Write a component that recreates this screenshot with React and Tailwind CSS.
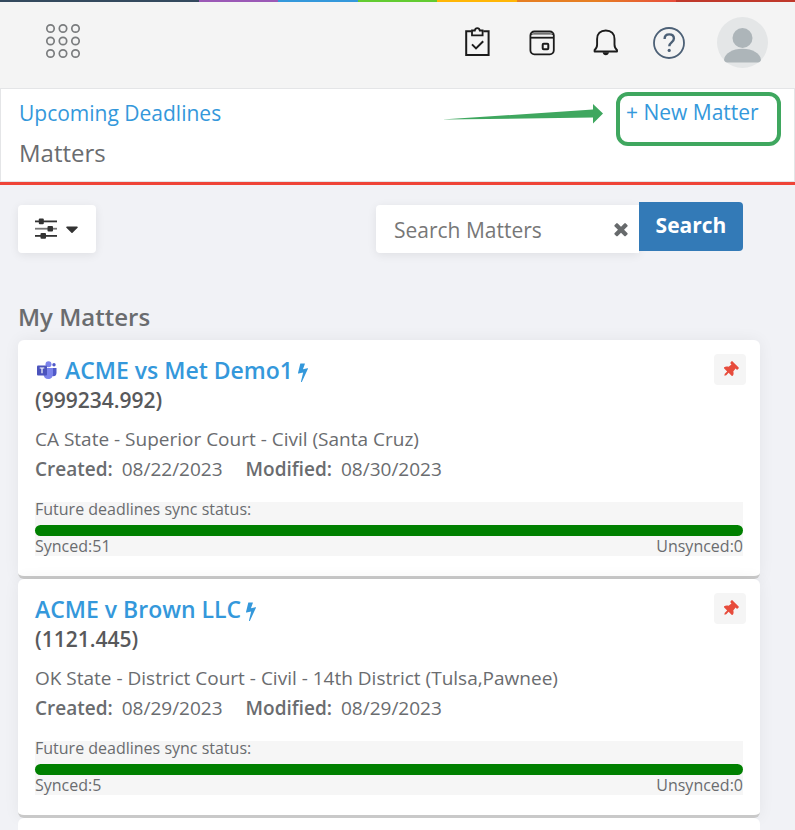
import { useState } from "react";
import { FaCaretDown, FaThumbtack } from "react-icons/fa";

const matters = [
  {
    id: "999234.992",
    name: "ACME vs Met Demo1",
    teams: true,
    court: "CA State - Superior Court - Civil (Santa Cruz)",
    created: "08/22/2023",
    modified: "08/30/2023",
    synced: 51,
    unsynced: 0,
  },
  {
    id: "1121.445",
    name: "ACME v Brown LLC",
    teams: false,
    court: "OK State - District Court - Civil - 14th District (Tulsa,Pawnee)",
    created: "08/29/2023",
    modified: "08/29/2023",
    synced: 5,
    unsynced: 0,
  },
];

const AppsIcon = () => (
  <svg className="h-9 w-9" viewBox="0 0 36 36" fill="none" stroke="#7a7c7e" strokeWidth="1.7">
    {[5.5, 18, 30.5].map((cy) =>
      [5.5, 18, 30.5].map((cx) => <circle key={`${cx}-${cy}`} cx={cx} cy={cy} r="3.7" />)
    )}
  </svg>
);

const TasksIcon = () => (
  <svg className="h-8 w-8" viewBox="0 0 32 32" fill="none" stroke="#1b1b1b" strokeWidth="2">
    <path d="M10.5 4.2H5.2v23.800h22.400V4.200h-5.300" />
    <path d="M11 3.500v4.800h10.600V3.500h-2.800c-.3-1.700-1.200-2.300-2.500-2.300s-2.200.6-2.500 2.300z" strokeWidth="1.800" />
    <path d="M11 17.400l4 4 7.200-7.200" />
  </svg>
);

const WalletIcon = () => (
  <svg className="h-8 w-8" viewBox="0 0 32 32" fill="none" stroke="#1b1b1b" strokeWidth="1.800">
    <rect x="5.400" y="4.500" width="23.400" height="22.800" rx="4" />
    <path d="M5.400 8.700c1-1.400 2-1.800 3.400-1.800h16.600c1.400 0 2.400.4 3.400 1.800" strokeWidth="1" />
    <path d="M5.400 10.700h23.400" />
    <rect x="17.700" y="16.700" width="5.600" height="5.600" rx="1" strokeWidth="2" />
  </svg>
);

const BellIcon = () => (
  <svg className="h-8 w-8" viewBox="0 0 32 32" fill="none" stroke="#1b1b1b" strokeWidth="1.900" strokeLinejoin="round">
    <path d="M5.600 24.500v-1.500c1.900-1.400 2.500-3 2.500-5.400v-5.600c0-5.200 3.300-8.500 8.700-8.500s8.700 3.300 8.700 8.500v5.600c0 2.400.6 4 2.500 5.400v1.500z" />
    <path d="M13.600 25.200c.4 2 1.500 3 3.200 3s2.800-1 3.200-3z" fill="#1b1b1b" stroke="none" />
  </svg>
);

const HelpIcon = () => (
  <svg className="h-8 w-8" viewBox="0 0 32 32" fill="none" stroke="#4c6076">
    <circle cx="16" cy="16" r="15" strokeWidth="1.800" />
    <path d="M11.600 12c0-2.900 1.900-4.600 4.600-4.600 2.800 0 4.700 1.600 4.700 4.200 0 3.900-4.600 3.700-4.600 7.600" strokeWidth="2.400" />
    <circle cx="16.200" cy="23.400" r="1.600" fill="#4c6076" stroke="none" />
  </svg>
);

const Avatar = () => (
  <svg className="h-[51px] w-[51px]" viewBox="0 0 51 51">
    <circle cx="25.500" cy="25.500" r="25.500" fill="#e4e6e7" />
    <circle cx="25.500" cy="21" r="10" fill="#adb5b9" />
    <path d="M7 43c.5-6.500 8.500-11.200 18.500-11.200S43.500 36.500 44 43c-.5 1.500-1.500 2.300-3 2.500H10c-1.500-.2-2.500-1-3-2.500z" fill="#adb5b9" />
  </svg>
);

const Arrow = () => (
  <svg className="mt-3 h-5 w-[161px]" viewBox="0 0 161 20" fill="#3fa75f">
    <path d="M0 15.500L151 5.500V0l10 9.600-10 10v-6z" />
  </svg>
);

const SlidersIcon = () => (
  <svg className="h-[22px] w-[22px]" viewBox="0 0 22 22" fill="#333">
    <rect y="2.500" width="22" height="1.800" />
    <rect y="9.800" width="22" height="1.800" fill="#777" />
    <rect y="17" width="22" height="1.800" />
    <rect x="3.800" y="0.600" width="5" height="5.600" rx="1" />
    <rect x="12.500" y="7.900" width="5.500" height="5.600" rx="1" />
    <rect x="5.500" y="15.100" width="5.500" height="5.600" rx="1" />
  </svg>
);

const ClearIcon = () => (
  <svg className="h-5 w-4" viewBox="0 0 1408 1792" fill="#676a6c">
    <path d="M1298 1322q0 40-28 68l-136 136q-28 28-68 28t-68-28l-294-294-294 294q-28 28-68 28t-68-28l-136-136q-28-28-28-68t28-68l294-294-294-294q-28-28-28-68t28-68l136-136q28-28 68-28t68 28l294 294 294-294q28-28 68-28t68 28l136 136q28 28 28 68t-28 68l-294 294 294 294q28 28 28 68z" />
  </svg>
);

const BoltIcon = () => (
  <svg className="mt-1 h-5 w-[10px]" viewBox="0 0 896 1792" fill="#3498db">
    <path d="M885 566q18 20 7 44l-540 1157q-13 25-42 25-4 0-14-2-17-5-25.500-19t-4.500-30l197-808-406 101q-4 1-12 1-18 0-31-11-18-15-13-39l201-825q4-14 16-23t28-9h328q19 0 32 12.500t13 29.500q0 8-5 18l-171 463 396-98q8-2 12-2 19 0 34 15z" />
  </svg>
);

const TeamsIcon = () => (
  <svg className="ml-[2px] h-5 w-5" viewBox="0 0 20 20">
    <circle cx="17" cy="4.800" r="1.700" fill="#5059c9" />
    <circle cx="11.500" cy="4.300" r="3" fill="#7b83eb" />
    <path d="M13 8h6.500v5c0 2-1.300 3.300-3 3.300s-3-1-3.500-3z" fill="#5059c9" />
    <path d="M6.500 8h9.500v6c0 3-2 5-4.800 5s-4.700-2-4.700-5z" fill="#7b83eb" />
    <rect y="5.500" width="10" height="10" rx="1" fill="#4b53bc" />
    <path d="M2.700 8h4.600M5 8v5.200" stroke="#fff" strokeWidth="1.200" />
  </svg>
);

const MatterCard = ({ matter }) => (
  <article className="rounded-md border-b-[3px] border-[#c9c9c9] bg-white px-[17px] pt-[14px] pb-5 shadow-[0_0_16px_rgba(0,0,0,0.06)]">
    <div className="flex items-start justify-between">
      <div>
        <h3 className="flex h-8 items-center gap-2 text-[23px] font-semibold text-[#3498db]">
          {matter.teams && <TeamsIcon />}
          <a href="#matter" className="flex items-center gap-[5px]">
            {matter.name}
            <BoltIcon />
          </a>
        </h3>
        <p className="text-[21px] leading-7 font-semibold text-[#58595b]">({matter.id})</p>
      </div>
      <button
        type="button"
        aria-label="Unpin matter"
        className="-mr-[3px] flex h-[31px] w-8 items-center justify-center rounded bg-[#f5f5f5] text-[#e74c3c]"
      >
        <FaThumbtack className="h-4 w-4 rotate-45" />
      </button>
    </div>
    <div className="mt-[10px] text-[19px] leading-[30px]">
      <p>{matter.court}</p>
      <p className="flex gap-[9px]">
        <span className="font-semibold">Created:</span>
        <span className="mr-[14px]">{matter.created}</span>
        <span className="font-semibold">Modified:</span>
        <span>{matter.modified}</span>
      </p>
    </div>
    <div className="mt-[18px] bg-[#f6f6f6] text-[16px]">
      <p className="mb-[9px] leading-[14px]">Future deadlines sync status:</p>
      <div className="h-[11px] rounded-full bg-[#008000]" />
      <div className="flex justify-between leading-5">
        <span>Synced:{matter.synced}</span>
        <span>Unsynced:{matter.unsynced}</span>
      </div>
    </div>
  </article>
);

const App = () => {
  const [search, setSearch] = useState("");

  return (
    <div className="flex min-h-screen flex-col bg-[#f1f2f6] font-['Open_Sans',sans-serif] text-[#6a6c6f]">
      <div className="h-[2px] bg-[linear-gradient(to_right,#34495e_25%,#9b59b6_25%,#9b59b6_35%,#3498db_35%,#3498db_45%,#62cb31_45%,#62cb31_55%,#ffb606_55%,#ffb606_65%,#e67e22_65%,#e67e22_75%,#e74c3c_85%,#c0392b_85%)]" />
      <header className="flex h-[86px] items-start justify-between bg-[#f4f4f4] pt-[15px] pr-[27px] pl-[45px]">
        <button type="button" aria-label="Apps" className="mt-[6px]">
          <AppsIcon />
        </button>
        <nav className="flex items-center gap-8">
          <button type="button" aria-label="Tasks">
            <TasksIcon />
          </button>
          <button type="button" aria-label="Wallet">
            <WalletIcon />
          </button>
          <button type="button" aria-label="Notifications">
            <BellIcon />
          </button>
          <button type="button" aria-label="Help">
            <HelpIcon />
          </button>
          <button type="button" aria-label="Profile">
            <Avatar />
          </button>
        </nav>
      </header>

      <section className="flex items-start justify-between border-b-[3px] border-[#ef4438] bg-white pr-[14px] pl-[19px] shadow-[inset_0_0_0_1px_#e4e5e7]">
        <div className="pt-[9px] pb-[11px]">
          <a href="#deadlines" className="block text-[21px] leading-8 text-[#3498db]">
            Upcoming Deadlines
          </a>
          <h1 className="pt-[6px] text-[24px] leading-9">Matters</h1>
        </div>
        <div className="flex items-start gap-[13px] pt-1">
          <Arrow />
          <a
            href="#new-matter"
            className="h-[54px] w-[165px] rounded-xl border-4 border-[#3fa75f] pl-[6px] text-[21px] leading-8 whitespace-nowrap text-[#3498db]"
          >
            + New Matter
          </a>
        </div>
      </section>

      <main className="flex flex-1 flex-col pr-[35px] pl-[18px]">
        <div className="flex items-start justify-between pt-[17px] pr-[17px]">
          <button
            type="button"
            aria-label="Filter matters"
            className="mt-[3px] flex h-12 w-[78px] items-center justify-center gap-2 rounded bg-white text-[#333] shadow-[0_2px_10px_rgba(0,0,0,0.08)]"
          >
            <SlidersIcon />
            <FaCaretDown className="h-5 w-[14px]" />
          </button>
          <form className="flex items-start" onSubmit={(e) => e.preventDefault()}>
            <div className="mt-[3px] flex h-12 w-[263px] items-center rounded-l bg-white pr-[10px] pl-[18px] shadow-[0_2px_10px_rgba(0,0,0,0.08)]">
              <input
                type="text"
                aria-label="Search Matters"
                placeholder="Search Matters"
                value={search}
                onChange={(e) => setSearch(e.target.value)}
                className="h-12 w-full min-w-0 pt-[2px] text-[21px] outline-none placeholder:text-[#777]"
              />
              <button type="button" aria-label="Clear search" onClick={() => setSearch("")}>
                <ClearIcon />
              </button>
            </div>
            <button
              type="submit"
              className="relative h-[49px] w-[104px] rounded-r bg-[#337ab7] pb-[2px] text-[21px] font-bold text-white"
            >
              Search
            </button>
          </form>
        </div>

        <h2 className="mt-[46px] mb-[5px] text-[24px] leading-9 font-semibold">My Matters</h2>
        {matters.map((matter) => (
          <MatterCard key={matter.id} matter={matter} />
        ))}
        <div className="flex-1 rounded-t-md bg-white" />
      </main>
    </div>
  );
};

export default App;
